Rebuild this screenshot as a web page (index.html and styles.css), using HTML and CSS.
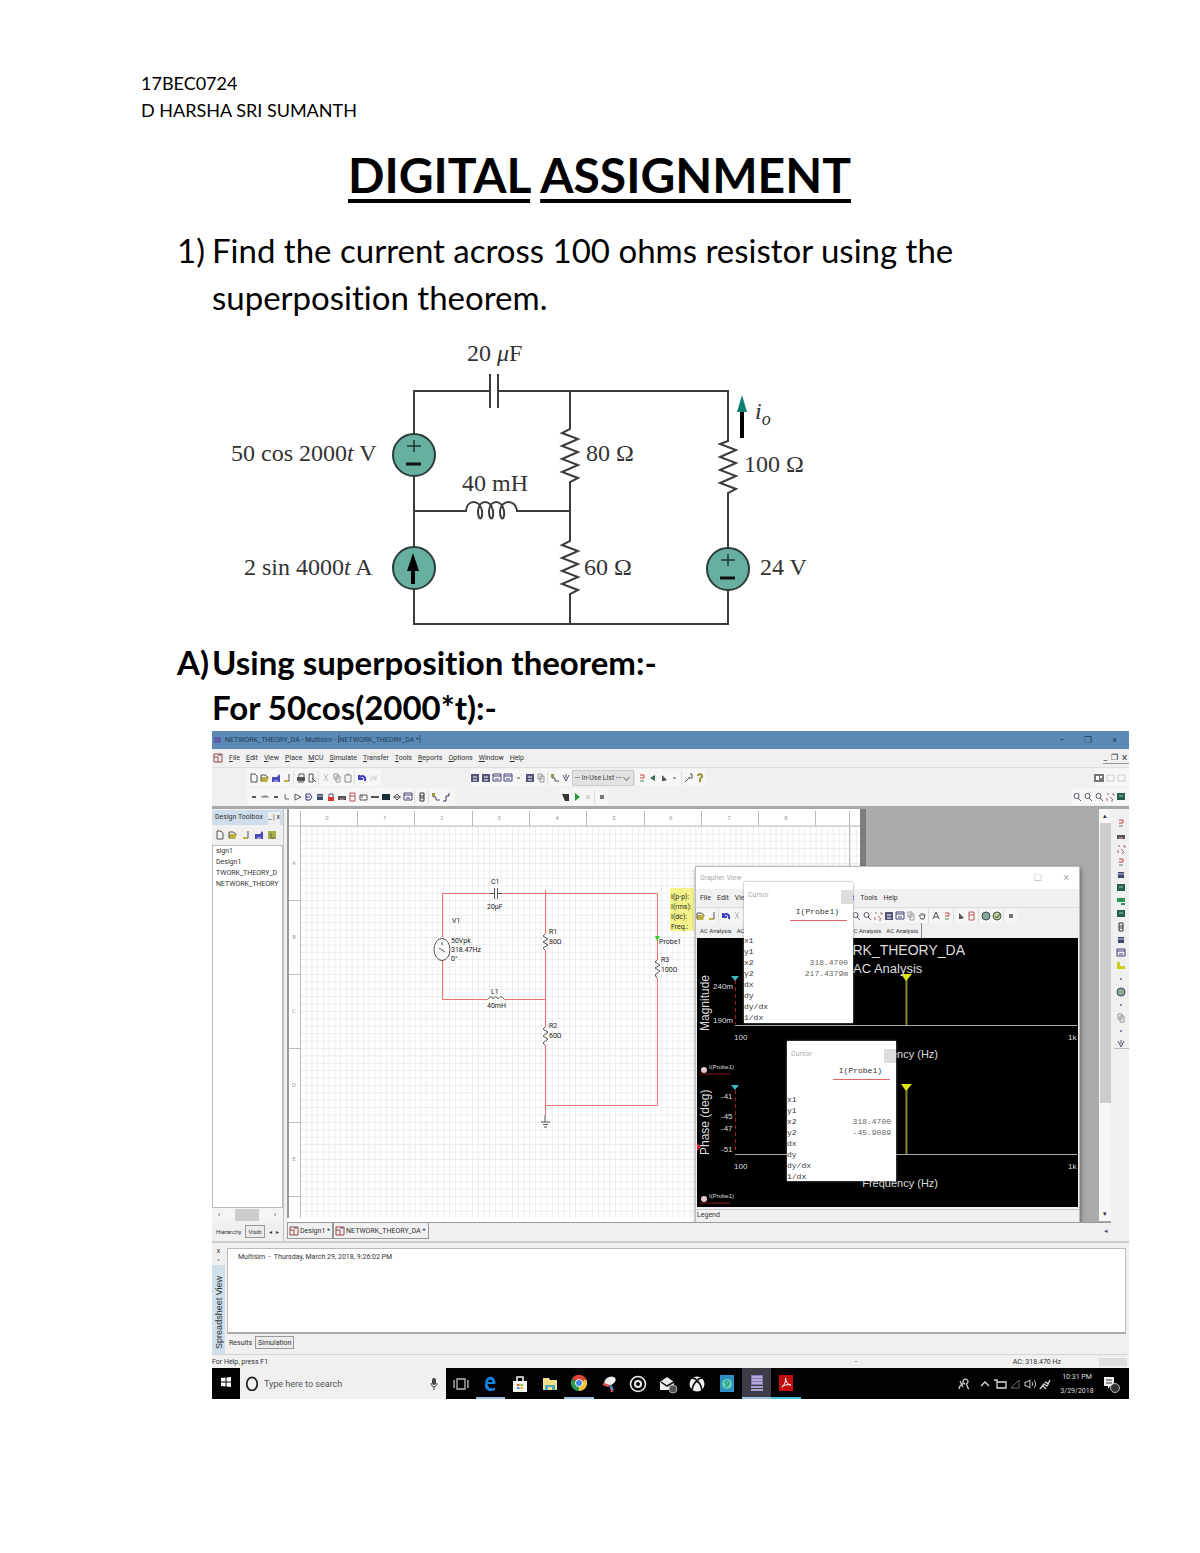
FILE: index.html
```html
<!DOCTYPE html>
<html lang="en">
<head>
<meta charset="utf-8">
<title>Digital Assignment</title>
<link rel="stylesheet" href="styles.css">
</head>
<body>
<main class="page">
  <header class="author">
    <p>17BEC0724</p>
    <p>D HARSHA SRI SUMANTH</p>
  </header>
  <h1 class="title"><span>DIGITAL</span> <span>ASSIGNMENT</span></h1>

  <section class="item">
    <span class="marker">1)</span>
    <p class="question">Find the current across 100 ohms resistor using the<br>superposition theorem.</p>
  </section>

  <svg class="circuit" viewBox="212 322 640 316" role="img" aria-label="Circuit diagram">
    <g fill="none" stroke="#3c3c3c" stroke-width="2">
      <path d="M490 391H414V624H728V391H498M490 374V408M498 374V408"/>
      <path d="M414 511H466C467 499 480 499 482 511C483 521 478 521 478 511C479 499 491 499 493 511C494 521 489 521 489 511C490 499 502 499 504 511C505 521 500 521 500 511C501 499 516 499 517 511H570"/>
      <path d="M570 391V429L562 433L578 439L562 446L578 452L562 459L578 465L562 472L578 478L570 482V541L562 545L578 551L562 558L578 564L562 571L578 577L562 584L578 590L570 594V624"/>
    </g>
    <path d="M728 438V494" stroke="#fff" stroke-width="6"/>
    <path d="M728 438V441L720 444L736 450L720 457L736 463L720 470L736 476L720 483L736 489L728 493V496" fill="none" stroke="#3c3c3c" stroke-width="2"/>
    <g fill="#67b0a0" stroke="#2b3c3a" stroke-width="2">
      <circle cx="414" cy="455" r="21"/><circle cx="414" cy="568" r="21"/><circle cx="728" cy="569" r="21"/>
    </g>
    <g stroke="#1f3531" fill="none">
      <path d="M407 446H421M414 440V452M721 560H735M728 554V566" stroke-width="1.5"/>
      <path d="M406 464H421M720 578H735" stroke-width="3" stroke="#111"/>
      <path d="M413 584V566" stroke-width="4" stroke="#000"/>
      <path d="M742 438V411" stroke-width="4" stroke="#000"/>
    </g>
    <path d="M413 553L419 571H407Z" fill="#000"/>
    <path d="M742 395L747 412H737Z" fill="#0f7d70"/>
    <g class="circuit-text">
      <text x="467" y="361">20 <tspan font-style="italic">μ</tspan>F</text>
      <text x="231" y="461">50 cos 2000<tspan font-style="italic">t</tspan> V</text>
      <text x="462" y="491">40 mH</text>
      <text x="244" y="575">2 sin 4000<tspan font-style="italic">t</tspan> A</text>
      <text x="586" y="461">80 Ω</text>
      <text x="584" y="575">60 Ω</text>
      <text x="744" y="472">100 Ω</text>
      <text x="760" y="575">24 V</text>
      <text x="755" y="419" font-style="italic">i<tspan dy="6" font-size="18">o</tspan></text>
    </g>
  </svg>

  <section class="item answer">
    <span class="marker">A)</span>
    <p>Using superposition theorem:-<br>For 50cos(2000*t):-</p>
  </section>

  <figure class="app">
    <div class="titlebar">
      <span class="app-logo"></span>
      <span>NETWORK_THEORY_DA - Multisim - [NETWORK_THEORY_DA *]</span>
      <div class="win-buttons"><button>−</button><button>❐</button><button>×</button></div>
    </div>
    <nav class="menubar">
      <span data-tools="sheet"></span>
      <button>File</button><button>Edit</button><button>View</button><button>Place</button><button>MCU</button><button>Simulate</button><button>Transfer</button><button>Tools</button><button>Reports</button><button>Options</button><button>Window</button><button>Help</button>
      <div class="mdi-buttons"><button>_</button><button>❐</button><button>X</button></div>
    </nav>
    <div class="toolbars">
      <div class="toolrow">
        <div class="tools first" data-tools="new open save page | print preview | cut copy paste | undo redo"></div>
        <div class="tools second" data-tools="grid grid grid2 grid2 dash grid copy | wire probe"></div>
        <span class="inuse-box"><select class="inuse" aria-label="In use list"><option>--- In-Use List ---</option></select></span>
        <div class="tools" data-tools="| mark back fwd dash | wrench help"></div>
        <div class="tools end" data-tools="panel box box"></div>
      </div>
      <div class="toolrow">
        <div class="tools first" data-tools="node res node diode op gate chip red meter red2 misc line ic conn grid2 | pole | wire bus"></div>
        <div class="tools sim" data-tools="record play pause | stop"></div>
        <div class="tools end" data-tools="zoom zoom zoom area full"></div>
      </div>
    </div>

    <div class="workspace">
      <aside class="dock">
        <div class="dock-title"><span>Design Toolbox</span><span class="dock-x">_ | x</span></div>
        <div class="dock-tools" data-tools="new open page save chart"></div>
        <ul class="tree"><li>sign1</li><li>Design1</li><li>TWORK_THEORY_D</li><li>NETWORK_THEORY</li></ul>
        <div class="hscroll"><span>‹</span><i></i><span>›</span></div>
        <div class="dock-tabs"><button>Hierarchy</button><button class="tab-box">Visib</button><button>◂</button><button>▸</button></div>
      </aside>

      <div class="editor">
        <div class="canvas">
          <svg class="sheet" viewBox="287 809 579 413" role="img" aria-label="Schematic sheet">
            <defs>
              <pattern id="dots" x="300" y="826" width="5.73" height="7.4" patternUnits="userSpaceOnUse"><path d="M0 .5H6M.5 0V8" stroke="#ececec" fill="none"/></pattern>
            </defs>
            <rect x="287" y="809" width="573" height="413" fill="#fff"/>
            <rect x="300" y="826" width="560" height="392" fill="url(#dots)"/>
            <path d="M288 809V1218" stroke="#999" stroke-width="2"/>
            <rect x="860" y="809" width="6" height="413" fill="#7d7d7d"/>
            <path d="M289 826H860M300.500 811V1218M849.500 811V866M357.500 811V826M414.500 811V826M472.500 811V826M529.500 811V826M586.500 811V826M644.500 811V826M701.500 811V826M758.500 811V826M815.500 811V826M289 900.500H300M289 974.500H300M289 1048.500H300M289 1122.500H300M289 1196.500H300" stroke="#bbb" fill="none"/>
            <g class="ruler">
              <text x="327" y="820">0</text><text x="385" y="820">1</text><text x="442" y="820">2</text><text x="499" y="820">3</text><text x="557" y="820">4</text><text x="614" y="820">5</text><text x="671" y="820">6</text><text x="729" y="820">7</text><text x="786" y="820">8</text>
              <text x="294" y="865">A</text><text x="294" y="939">B</text><text x="294" y="1013">C</text><text x="294" y="1087">D</text><text x="294" y="1161">E</text>
            </g>
            <path d="M442.500 937V893.500H490M502 893.500H657.500V960M657.500 978V1105.500H545.500M442.500 960V999.500H488M504 999.500H545.500M545.500 890V934M545.500 950V1027M545.500 1045V1115" stroke="#f07070" fill="none"/>
            <g fill="none" stroke="#555">
              <path d="M490 893.500H494M498 893.500H502M494.500 888V899M497.500 888V899"/>
              <ellipse cx="442" cy="949.500" rx="8" ry="11"/>
              <path d="M439 948L445 952M442 942V945M488 999C490 996 492 996 493 999C494 996 497 996 498 999C500 996 502 996 504 999"/>
              <path d="M545 934L543 936L548 939L543 942L548 945L543 948L545 950M545 1027L543 1029L548 1032L543 1036L548 1039L543 1043L545 1045M657 960L655 962L660 965L655 968L660 971L655 975L657 978M545 1115V1122M541 1122H550M543 1124.500H548M544 1127H547"/>
            </g>
            <rect x="670" y="888" width="24" height="43" fill="#f4f48a"/>
            <path d="M655 936H660L657 941Z" fill="#32c832"/>
            <g class="parts">
              <text x="491" y="884">C1</text><text x="487" y="909">20µF</text>
              <text x="452" y="923">V1</text><text x="451" y="943">50Vpk</text><text x="451" y="952">318.47Hz</text><text x="451" y="961">0°</text>
              <text x="549" y="934">R1</text><text x="549" y="944">80Ω</text>
              <text x="491" y="994">L1</text><text x="487" y="1008">40mH</text>
              <text x="549" y="1028">R2</text><text x="549" y="1038">60Ω</text>
              <text x="661" y="962">R3</text><text x="661" y="972">100Ω</text><text x="659" y="944">Probe1</text>
              <text x="671" y="899">I(p-p):</text><text x="671" y="909">I(rms):</text><text x="671" y="919">I(dc):</text><text x="671" y="929">Freq.:</text>
            </g>
          </svg>

          <div class="grapher">
            <div class="g-title"><span>Grapher View</span><div class="g-win"><button>□</button><button>×</button></div></div>
            <div class="g-menu"><button>File</button><button>Edit</button><button>View</button><button class="g-late">t</button><button>Tools</button><button>Help</button></div>
            <div class="g-tools"><div class="tools" data-tools="open page | undo cut"></div><div class="tools g-right" data-tools="zoom zoom area grid grid2 copy hand | text mark | fwd red2 | globe check | stop"></div></div>
            <div class="g-tabs"><button>AC Analysis</button><button>AC</button><button class="g-late2">C Analysis</button><button class="on">AC Analysis</button></div>
            <svg class="plot" viewBox="697 938 381 269" role="img" aria-label="AC analysis plots">
              <rect x="697" y="938" width="381" height="269" fill="#000"/>
              <path d="M735 1025.500H1077M735 1154.500H1077" stroke="#aaa"/>
              <path d="M735.500 980V1024M735.500 1090V1152" stroke="#a01818" stroke-dasharray="4 3"/>
              <path d="M906.500 976V1025M906.500 1086V1154" stroke="#85852a" stroke-width="2"/>
              <path d="M901 974H912L906 981ZM901 1084H912L906 1091Z" fill="#e2e21c"/>
              <path d="M731 976H739L735 981ZM731 1085H739L735 1090Z" fill="#3bb6bd"/>
              <path d="M700 1074H730M700 1203H730" stroke="#8e1c1c"/>
              <circle cx="704" cy="1070" r="3" fill="#e6c8c8"/><circle cx="704" cy="1199" r="3" fill="#e6c8c8"/>
              <path d="M697 1143L701 1147L697 1151Z" fill="#d22"/>
              <g class="plot-big"><text x="965" y="955" text-anchor="end">NETWORK_THEORY_DA</text><text x="853" y="973" class="mid">AC Analysis</text></g>
              <g class="plot-mid"><text x="938" y="1058" text-anchor="end">Frequency (Hz)</text><text x="938" y="1187" text-anchor="end">Frequency (Hz)</text>
                <text class="axis" transform="translate(709 1031) rotate(-90)">Magnitude</text><text class="axis" transform="translate(709 1155) rotate(-90)">Phase (deg)</text></g>
              <g class="plot-small"><text x="713" y="989">240m</text><text x="713" y="1023">190m</text><text x="734" y="1040">100</text><text x="1068" y="1040">1k</text><text x="721" y="1099">-41</text><text x="721" y="1119">-45</text><text x="721" y="1131">-47</text><text x="721" y="1152">-51</text><text x="734" y="1169">100</text><text x="1068" y="1169">1k</text></g>
              <g class="plot-tiny"><text x="709" y="1069">I(Probe1)</text><text x="709" y="1198">I(Probe1)</text></g>
            </svg>
            <div class="g-foot">Legend</div>
          </div>

          <div class="cursor c1">
            <div class="c-title"><span>Cursor</span><button aria-label="Close"></button></div>
            <table>
              <thead><tr><th></th><th><span>I(Probe1)</span></th></tr></thead>
              <tbody><tr><td>x1</td><td></td></tr><tr><td>y1</td><td></td></tr><tr><td>x2</td><td>318.4700</td></tr><tr><td>y2</td><td>217.4379m</td></tr><tr><td>dx</td><td></td></tr><tr><td>dy</td><td></td></tr><tr><td>dy/dx</td><td></td></tr><tr><td>1/dx</td><td></td></tr></tbody>
            </table>
          </div>
          <div class="cursor c2">
            <div class="c-title"><span>Cursor</span><button aria-label="Close"></button></div>
            <table>
              <thead><tr><th></th><th><span>I(Probe1)</span></th></tr></thead>
              <tbody><tr><td>x1</td><td></td></tr><tr><td>y1</td><td></td></tr><tr><td>x2</td><td>318.4700</td></tr><tr><td>y2</td><td>-45.9089</td></tr><tr><td>dx</td><td></td></tr><tr><td>dy</td><td></td></tr><tr><td>dy/dx</td><td></td></tr><tr><td>1/dx</td><td></td></tr></tbody>
            </table>
          </div>
          <div class="vscroll"><span>▴</span><i></i><span>▾</span></div>
        </div>
        <div class="doc-tabs">
          <button><span data-tools="sheet"></span>Design1 *</button><button><span data-tools="sheet"></span>NETWORK_THEORY_DA *</button>
          <span class="tab-arrow">◂</span>
        </div>
      </div>
      <div class="instruments" data-tools="mark meter area mark chip full green full pole chip grid2 yellow dot globe dot copy dot probe"></div>
    </div>

    <div class="spread">
      <div class="spread-side"><span class="pin">x</span><span class="pin">▫</span><span class="spread-name">Spreadsheet View</span></div>
      <div class="spread-main">
        <div class="log">Multisim  -  Thursday, March 29, 2018, 9:26:02 PM</div>
        <div class="log-tabs"><button>Results</button><button class="tab-box">Simulation</button></div>
      </div>
    </div>
    <div class="status"><span>For Help, press F1</span><span class="s-dash">-</span><span class="s-ac">AC: 318.470 Hz</span><span class="s-grip"></span></div>

    <div class="taskbar">
      <button class="start" aria-label="Start"><svg viewBox="0 0 12 12"><path d="M1 2L5.500 1.500V5.500H1ZM6.500 1.400L11 1V5.500H6.500ZM1 6.500H5.500V10.500L1 10ZM6.500 6.500H11V11L6.500 10.600Z" fill="#fff"/></svg></button>
      <label class="search">
        <svg viewBox="0 0 16 18" width="14"><ellipse cx="8" cy="9" rx="6" ry="7.500" fill="none" stroke="#222" stroke-width="2"/></svg>
        <input type="text" placeholder="Type here to search" aria-label="Search">
        <svg viewBox="0 0 8 14" width="8"><rect x="2" y="1" width="4" height="7" rx="2" fill="#444"/><path d="M1 6C1 11 7 11 7 6M4 10V13" fill="none" stroke="#444"/></svg>
      </label>
      <div class="pinned">
        <button aria-label="Task view"><svg viewBox="0 0 20 20"><path d="M6 5H14V15H6ZM4 7H3V13H4M16 7H17V13H16" fill="none" stroke="#bbb" stroke-width="1.300"/></svg></button>
        <button class="run" aria-label="Edge"><svg viewBox="0 0 20 20"><path d="M5 10C6 1 16 2 15.500 11H7.500C8 16 13 16 15 14.500V17C9 20 4 16 5 11C6 7 9 6 11 6C8 6 6 8 5 10ZM8 9H12.500C12 6 8.500 6 8 9Z" fill="#1583e0" fill-rule="evenodd"/></svg></button>
        <button aria-label="Store"><svg viewBox="0 0 20 20"><path d="M3 7H17V18H3Z" fill="#f4f4ee"/><path d="M7 7V3H13V7" fill="none" stroke="#f4f4ee" stroke-width="1.500"/><path d="M7 10H9.500V12H7Z" fill="#e05a30"/><path d="M10.500 10H13V12H10.500Z" fill="#7db93a"/><path d="M7 13H9.500V15H7Z" fill="#2f9be0"/><path d="M10.500 13H13V15H10.500Z" fill="#f2bd2a"/></svg></button>
        <button aria-label="Explorer"><svg viewBox="0 0 20 20"><path d="M3 4H9L10 6H17V16H3Z" fill="#f2e08c"/><path d="M5 11H15V16H12V13H8V16H5Z" fill="#52a8b4"/></svg></button>
        <button class="run" aria-label="Chrome"><svg viewBox="0 0 20 20"><path d="M10 10L3 6A8 8 0 0 1 17 6Z" fill="#dd4638"/><path d="M10 10L17 6A8 8 0 0 1 10 18Z" fill="#f4c430"/><path d="M10 10L10 18A8 8 0 0 1 3 6Z" fill="#2d9c50"/><circle cx="10" cy="10" r="3.800" fill="#fff"/><circle cx="10" cy="10" r="3" fill="#4686ea"/></svg></button>
        <button aria-label="Snipping tool"><svg viewBox="0 0 20 20"><ellipse cx="11" cy="7" rx="6" ry="4" transform="rotate(-25 11 7)" fill="#eee"/><path d="M4 10L10 12M12 12L13 18" stroke="#d85050" stroke-width="2.500"/><path d="M11 11L14 16" stroke="#4a90c8" stroke-width="2"/></svg></button>
        <button aria-label="Groove"><svg viewBox="0 0 20 20"><circle cx="10" cy="10" r="7.500" fill="none" stroke="#eee" stroke-width="1.600"/><circle cx="10" cy="10" r="3" fill="none" stroke="#eee" stroke-width="2"/></svg></button>
        <button aria-label="Mail"><svg viewBox="0 0 20 20"><path d="M2 8L9 3L16 8V16H2Z" fill="#f0f0f0"/><path d="M3 8L9 12L16 8" fill="none" stroke="#111" stroke-width="1.500"/><circle cx="15" cy="15" r="4" fill="#555" stroke="#aaa"/></svg></button>
        <button aria-label="Xbox"><svg viewBox="0 0 20 20"><circle cx="10" cy="10" r="7.500" fill="#eee"/><path d="M5 16C6 11 8 8 10 7C12 8 14 11 15 16M5 4C7 4 9 5 10 7C11 5 13 4 15 4" fill="none" stroke="#111" stroke-width="1.600"/></svg></button>
        <button aria-label="Reader"><svg viewBox="0 0 20 20"><path d="M3 1H17V18H3Z" fill="#2f8fc4"/><circle cx="10" cy="10" r="5" fill="#62d3a4"/><path d="M8 12C13 13 13 7 10 7C7 7 8 11 11 10" fill="none" stroke="#1a7899"/></svg></button>
        <button class="run active" aria-label="Multisim"><svg viewBox="0 0 20 20"><path d="M4 2H16V12H4Z" fill="#8877bb"/><path d="M5 4H15M5 7H15M5 10H15" stroke="#e4e0f4"/><path d="M4 14H16M4 17H16" stroke="#aaa0cf" stroke-width="2"/></svg></button>
        <button class="run cyan" aria-label="Acrobat"><svg viewBox="0 0 20 20"><path d="M3 2H17V18H3Z" fill="#c40d0d"/><path d="M6 14C9 11 10 8 9.500 5C10 9 12 12 15 12C11 11 8 12 6 14Z" fill="none" stroke="#fff"/></svg></button>
      </div>
      <div class="tray">
        <svg viewBox="0 0 14 14"><path d="M2 12C3 7 6 6 8 7M8 7A2.500 2.500 0 1 1 9 7M9 7C11 9 10 11 12 12M3 4L6 10" fill="none" stroke="#ccc" stroke-width="1.300"/></svg>
        <svg viewBox="0 0 14 14"><path d="M3 9L7 5L11 9" fill="none" stroke="#ddd" stroke-width="1.300"/></svg>
        <svg viewBox="0 0 14 14"><path d="M4 5H13V11H4ZM1 3H4V7" fill="none" stroke="#ddd" stroke-width="1.300"/></svg>
        <svg viewBox="0 0 14 14"><path d="M3 11L11 3V11Z" fill="none" stroke="#666"/></svg>
        <svg viewBox="0 0 14 14"><path d="M2 5H4L7 3V11L4 9H2ZM9 5C10 6 10 8 9 9M11 3C13 5 13 9 11 11" fill="none" stroke="#ccc"/></svg>
        <svg viewBox="0 0 14 14"><path d="M2 12L6 7L9 9L12 3M4 8L8 12M7 5L11 7" fill="none" stroke="#ccc" stroke-width="1.500"/></svg>
        <div class="clock"><span>10:31 PM</span><span>3/29/2018</span></div>
        <svg class="notes" viewBox="0 0 18 18"><path d="M2 2H12V11H8L6 14V11H2Z" fill="#f2f2f2"/><path d="M4 5H10M4 8H10" stroke="#333"/><circle cx="13" cy="13" r="4.500" fill="#333" stroke="#bbb"/></svg>
      </div>
    </div>
  </figure>
</main>
<script src="app.js"></script>
</body>
</html>
```
FILE: styles.css
```css
* { box-sizing: border-box; }
body { margin: 0; background: #fff; color: #000; font-family: Lato, "Open Sans", sans-serif; font-variant-ligatures: none; }
p, h1, ul, figure { margin: 0; padding: 0; }
button { border: 0; padding: 0; margin: 0; background: none; font: inherit; color: inherit; line-height: inherit; white-space: nowrap; }

.page { padding: 70px 71px 154px 141px; }
.author { font-size: 18px; line-height: 27px; }
.title { margin: 21px 71px 0 0; text-align: center; font-size: 48px; line-height: 60px; font-weight: 700; }
.title span { text-decoration: underline; text-decoration-thickness: 4px; text-underline-offset: 6px; text-decoration-skip-ink: none; }
.item { display: flex; margin-top: 22px; padding-left: 36px; font-size: 33px; line-height: 47px; white-space: nowrap; }
.item .marker { flex: none; width: 35px; }
.answer { margin-top: 2px; line-height: 45px; font-weight: 700; }
.circuit { display: block; width: 640px; height: 316px; margin: 1px 0 0 71px; }
.circuit-text { font: 24px "Liberation Serif", serif; fill: #333; }

/* Application window */
.app { margin: 1px 0 0 71px; font: 7px/10px "Liberation Sans Narrow", Roboto, sans-serif; color: #333; background: #f0f0f0; overflow: hidden; }
.titlebar { display: flex; align-items: center; gap: 4px; height: 18px; padding-left: 2px; background: #5b8ab5; color: #1f3c58; }
.app-logo { width: 7px; height: 6px; background: #5d5fa8; }
.win-buttons { display: flex; gap: 20px; margin-left: auto; padding-right: 12px; font-size: 9px; }
.menubar { display: flex; align-items: center; gap: 6px; height: 19px; padding-left: 1px; border-bottom: 1px solid #ddd; }
.menubar > button::first-letter { text-decoration: underline; }
.mdi-buttons { display: flex; gap: 4px; margin-left: auto; padding-right: 2px; border-bottom: 1px solid #999; font-size: 8px; color: #111; }
.toolbars { height: 41px; border-bottom: 3px solid #a8a8a8; }
.toolrow { display: flex; align-items: center; height: 19px; }
[data-tools] { display: flex; align-items: center; }
[data-tools] button { flex: none; width: 11px; height: 11px; }
[data-tools] svg { display: block; width: 10px; height: 10px; }
[data-tools] .sep { width: 3px; height: 14px; border-left: 1px solid #ddd; }
.tools { height: 17px; background: #f6f6f6; }
.first { margin-left: 35px; padding: 0 2px; }
.second { margin-left: 89px; }
.inuse-box { display: flex; align-items: center; width: 62px; height: 16px; padding-right: 4px; border: 1px solid #ccc; background: #e2e2e2; }
.inuse-box::after { content: ""; width: 4px; height: 4px; border: solid #888; border-width: 0 1px 1px 0; rotate: 45deg; }
.inuse { flex: 1; min-width: 0; height: 14px; padding: 0 1px; border: 0; appearance: none; background: none; font: inherit; color: #444; }
.sim { margin-left: 106px; }
.end { margin-left: auto; padding-right: 2px; }

.workspace { display: flex; height: 432px; }
.dock { display: flex; flex-direction: column; width: 72px; padding-top: 1px; border-right: 1px solid #c4c4c4; }
.dock-title { display: flex; justify-content: space-between; height: 15px; padding: 2px 3px 0; background: #cfdeea; white-space: nowrap; }
.dock-x { background: #eee; }
.dock-tools { height: 20px; padding-left: 3px; gap: 2px; }
.tree { flex: 1; list-style: none; padding-left: 3px; background: #fff; border: 1px solid #bbb; line-height: 11px; overflow: hidden; }
.hscroll { display: flex; justify-content: space-between; align-items: center; height: 14px; margin-right: 1px; padding: 0 6px; background: #f4f4f4; }
.hscroll i { width: 24px; height: 12px; background: #ccc; }
.dock-tabs { display: flex; gap: 4px; height: 19px; padding: 3px 4px; font-size: 6px; }
.tab-box { border: 1px solid #999; padding: 0 2px; background: #ececec; }

.editor { flex: 1; min-width: 0; display: flex; flex-direction: column; padding-left: 3px; }
.canvas { position: relative; flex: 1; background: #ababab; border-bottom: 1px solid #999; overflow: hidden; }
.sheet { display: block; width: 579px; height: 413px; }
.ruler { font-size: 6px; fill: #999; text-anchor: middle; }
.parts { font: 7px "Liberation Sans Narrow", Roboto, sans-serif; fill: #222; }
.vscroll { position: absolute; top: 0; right: 0; bottom: 1px; width: 12px; display: flex; flex-direction: column; align-items: center; background: #f6f6f6; }
.vscroll span { height: 14px; line-height: 14px; }
.vscroll i { width: 11px; height: 280px; margin-bottom: auto; background: #cdcdcd; }
.doc-tabs { display: flex; align-items: flex-start; height: 18px; }
.doc-tabs button { display: flex; align-items: center; gap: 1px; height: 16px; padding: 0 2px 0 1px; border: 1px solid #999; border-top: 0; }
.tab-arrow { margin-left: auto; padding: 3px; color: #557; }
.instruments { width: 15px; margin-left: 3px; flex-direction: column; gap: 2px; padding-top: 8px; height: 240px; border-bottom: 1px solid #bbb; }

/* Floating grapher */
.grapher { position: absolute; left: 408px; top: 57px; width: 385px; height: 358px; display: flex; flex-direction: column; border: 1px solid #bbb; background: #f0f0f0; box-shadow: 1px 2px 4px #666; }
.g-title { display: flex; align-items: center; height: 22px; padding-left: 4px; background: #fff; color: #aaa; }
.g-win { display: flex; gap: 22px; margin-left: auto; padding-right: 10px; font-size: 11px; }
.g-menu { display: flex; align-items: center; gap: 6px; height: 19px; padding-left: 4px; border-bottom: 1px solid #ddd; }
.g-late { margin-left: 96px; }
.g-tools { display: flex; align-items: center; height: 15px; }
.g-tools .tools { height: 14px; }
.g-right { margin-left: 108px; }
.g-tabs { display: flex; align-items: center; gap: 5px; height: 15px; padding-left: 4px; font-size: 6px; }
.g-late2 { margin-left: 104px; }
.g-tabs .on { height: 15px; padding-right: 3px; border-right: 1px solid #888; }
.plot { display: block; width: 381px; height: 269px; margin-left: 1px; }
.plot text { fill: #ddd; }
.plot-big { font: 14px "Liberation Sans", sans-serif; }
.plot-big .mid { font-size: 13px; }
.plot-mid { font: 11px "Liberation Sans", sans-serif; }
.plot-mid .axis { font-size: 12px; }
.plot-small { font: 8px "Liberation Sans", sans-serif; }
.plot-tiny { font: 6px "Liberation Sans", sans-serif; }
.g-foot { margin-top: 2px; border-top: 1px solid #ccc; padding-left: 1px; }

.cursor { position: absolute; width: 109px; height: 141px; background: #fff; box-shadow: 0 0 2px #888; }
.c1 { left: 457px; top: 73px; }
.c2 { left: 500px; top: 232px; height: 140px; }
.c-title { display: flex; justify-content: space-between; height: 24px; padding: 8px 0 0 4px; color: #aaa; }
.c-title button { width: 12px; height: 14px; background: #ddd; }
.cursor table { width: 100%; border-spacing: 0; font: 8px/11px "Liberation Mono", monospace; }
.cursor th, .cursor td { height: 11px; padding: 0; text-align: left; font-weight: 400; }
.cursor th { height: 29px; vertical-align: top; }
.cursor th + th { text-align: right; padding-right: 6px; }
.cursor th span { display: inline-block; padding: 0 8px 3px 6px; border-bottom: 1px solid #d66; }
.cursor td + td { text-align: right; padding-right: 5px; color: #666; }

/* Spreadsheet view */
.spread { display: flex; height: 114px; padding-top: 4px; border-top: 2px solid #ccc; border-bottom: 1px solid #d4d4d4; }
.spread-side { width: 13px; display: flex; flex-direction: column; align-items: center; padding-bottom: 5px; background: linear-gradient(#f0f0f0 18px, #cfdfec 18px); }
.pin { height: 9px; line-height: 9px; }
.spread-name { margin-top: auto; writing-mode: vertical-rl; transform: rotate(180deg); font: 9px/12px "Liberation Sans", sans-serif; }
.spread-main { flex: 1; padding: 1px 3px 0 2px; }
.log { height: 86px; padding: 3px 10px; white-space: pre; background: #fff; border: 1px solid #bbb; border-bottom: 2px solid #aaa; }
.log-tabs { display: flex; gap: 3px; padding: 2px; }
.log-tabs .tab-box { height: 13px; }
.status { display: flex; align-items: center; height: 13px; }
.s-dash { margin-left: auto; }
.s-ac { margin-left: 156px; }
.s-grip { width: 28px; height: 8px; margin: 0 2px 0 38px; background: #ddd; }

.taskbar { display: flex; height: 31px; background: #020204; }
.start { width: 28px; }
.start svg { width: 12px; height: 12px; }
.search { display: flex; align-items: center; width: 206px; padding: 0 8px 0 5px; background: #f0f0f0; }
.search input { flex: 1; min-width: 0; padding: 0 5px; border: 0; background: none; font: 9px "Liberation Sans Narrow", Roboto, sans-serif; }
.search input::placeholder { color: #555; }
.pinned { display: flex; width: 355px; }
.pinned button { flex: 1; }
.pinned svg { display: block; width: 20px; height: 20px; margin: 0 auto; }
.run { border-bottom: 2px solid #9cc0e0; }
.pinned .cyan { border-color: #4bc3d6; }
.pinned .active { background: #3c3b46; }
.tray { display: flex; align-items: center; margin-left: auto; padding-right: 9px; gap: 1px; }
.tray svg { width: 14px; height: 14px; }
.tray svg:first-child { margin-right: 6px; }
.clock { display: flex; flex-direction: column; align-items: center; width: 34px; margin: 0 7px; line-height: 14px; color: #ddd; }
.tray .notes { width: 18px; height: 18px; }
```
FILE: app.js
```js
// Toolbar glyphs, each on a 10 x 10 grid
const s = (d, c = '#555', w = 1) => `<path d="${d}" fill="none" stroke="${c}" stroke-width="${w}"/>`;
const f = (d, c) => `<path d="${d}" fill="${c}"/>`;
const icons = {
  new: s('M2 1H6L8 3V9H2Z'),
  open: f('M1 4H9L7 9H1Z', '#b8b040') + s('M1 8V2H5L8 4'),
  save: f('M1 4H6L8 1L9 3V9H1Z', '#4a4ab8') + s('M3 8H7', '#ddd'),
  page: s('M7 1V8H2') + f('M2 7H6V9H2Z', '#c5b43c'),
  print: f('M1 4H9V8H1Z', '#555') + s('M3 4V1H8V4M2 9H8'),
  preview: s('M2 1H6V9H2ZM5 5L9 9'),
  cut: s('M3 1L7 8M7 1L3 8', '#bbb'),
  copy: s('M2 1H6V6H2ZM4 3H8V9H4Z', '#999'),
  paste: s('M2 2H8V9H2ZM4 1H6', '#888'),
  undo: s('M2 2V6H6M2 6C4 1 9 3 8 8', '#4040c0', 2),
  redo: s('M8 2V6H4M8 6C6 2 2 3 3 8', '#ccc'),
  grid: f('M1 1H9V9H1Z', '#55557a') + s('M3 4H7M3 7H7', '#fff'),
  grid2: s('M1 1H9V8H1ZM1 3H9M3 6H7', '#44447c'),
  dash: s('M3 5H6'),
  wire: s('M2 2V5H5V8H9') + f('M1 1H4V4H1Z', '#9a953c'),
  probe: s('M2 2L5 8L8 2M5 1V5', '#557'),
  mark: s('M3 2H7V5H3', '#c44') + s('M3 8H7', '#585'),
  back: f('M7 2V8L2 5Z', '#357050'), fwd: f('M3 2L8 7L5 8L3 8Z', '#555'),
  wrench: s('M1 9L6 4M6 1H8V5H5', '#555'), help: s('M3 3C3 0 8 1 7 4L5 6V9', '#9b953c', 2),
  panel: f('M0 1H10V9H0Z', '#777') + f('M2 3H5V7H2ZM6 3H8V5H6Z', '#fff'),
  box: s('M2 2H9V8H2Z', '#ccc'),
  node: s('M3 5H7', '#555', 2), res: s('M1 5H9M3 4H7', '#777'), diode: s('M3 2V7H7', '#666'),
  op: s('M2 2V8L8 5Z'), gate: s('M2 2H6L8 5L6 8H2ZM2 5H6', '#337'), chip: f('M2 2H8V8H2Z', '#38486e') + s('M1 4H9', '#ccd'),
  red: f('M2 5H8V9H2Z', '#d33') + s('M3 5V2H7V5'), meter: f('M1 4H9V8H1Z', '#555') + s('M3 7H7', '#e99'),
  red2: s('M2 1H7V9H2ZM2 4H7', '#b55'), misc: s('M1 3H8V8H1ZM3 3V6', '#555'), line: s('M1 5H9', '#555', 2),
  ic: f('M1 2H9V8H1Z', '#152f35'), conn: s('M1 5H9M5 2L8 5L5 8L2 5Z'), pole: s('M3 1H7V9H3ZM3 4H7M3 6H7', '#333'),
  bus: s('M7 1V4H4V9H1', '#335'), record: f('M1 2H8V9H4Z', '#333'), play: f('M3 1L8 5L3 9Z', '#2d9a38'),
  pause: s('M4 3V7M6 3V7', '#bbb'), stop: f('M3 3H7V7H3Z', '#777'),
  zoom: s('M7 4A2.5 2.5 0 1 1 2 4A2.5 2.5 0 1 1 7 4M6 6L9 9', '#556'), area: s('M2 9V6M2 2H4M7 2H9V4M8 9H6M5 5L8 8', '#a66'),
  full: f('M1 1H9V8H1Z', '#285f4c') + s('M3 4H7', '#9cb'), green: f('M1 2H9V6H1ZM5 7H9V9H5Z', '#2f9456'),
  chart: f('M1 1H9V9H1Z', '#a9ad48') + s('M4 3V8H8', '#565'), sheet: s('M1 1H9V9H1ZM1 4H5V9', '#944') + s('M5 2H8', '#446'),
  hand: s('M2 4L4 8H7L8 3M4 2V5M6 2V5'), text: s('M2 8L5 1L8 8M3 6H7'),
  globe: `<circle cx="5" cy="5" r="4" fill="#86ac8c" stroke="#446"/>`, check: `<circle cx="5" cy="5" r="4" fill="#bfc99a" stroke="#454"/>` + s('M3 5L5 7L8 3', '#262'),
  yellow: f('M1 1H4V5H9V8H1Z', '#c9cc22'), dot: f('M4 4H6V6H4Z', '#88a')
};
document.querySelectorAll('[data-tools]').forEach(bar => {
  bar.innerHTML = bar.dataset.tools.split(' ').map(name => name === '|'
    ? '<span class="sep"></span>'
    : bar.tagName === 'SPAN'
      ? `<svg viewBox="0 0 10 10">${icons[name]}</svg>`
      : `<button type="button" aria-label="${name}"><svg viewBox="0 0 10 10">${icons[name]}</svg></button>`).join('');
});
```
